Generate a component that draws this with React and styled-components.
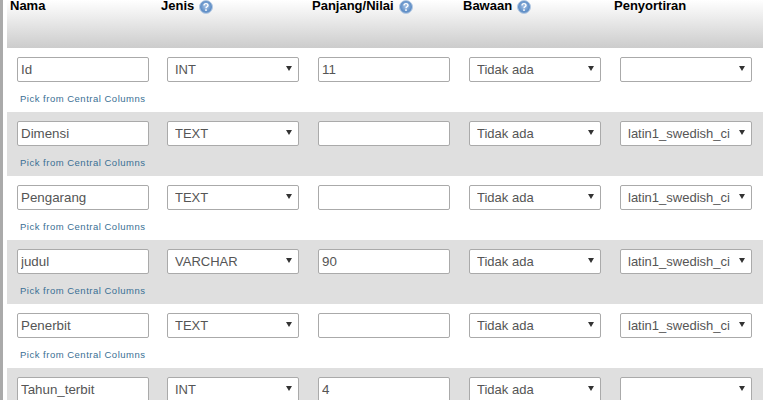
import React from "react";
import styled, { createGlobalStyle } from "styled-components";

const GlobalStyle = createGlobalStyle`
  html, body {
    margin: 0;
    height: 400px;
    overflow: hidden;
    background: #fff;
    font-family: "Liberation Sans", Arial, sans-serif;
  }
`;

const Page = styled.div`
  height: 400px;
  overflow: hidden;
  box-sizing: border-box;
  padding-left: 4px;
  border-left: 3px solid #aaa;
`;

const COLUMNS = "150px 151px 151px 151px 151px";

const HeaderRow = styled.div`
  display: grid;
  grid-template-columns: 151px 151px 151px 151px 151px;
  height: 48px;
  padding-left: 3px;
  background: linear-gradient(#fff, #ccc);
`;

const HeaderCell = styled.div`
  display: flex;
  align-items: flex-start;
  gap: 5px;
  font-size: 13px;
  font-weight: bold;
  line-height: 12px;
  color: #000;
`;

const Row = styled.div`
  display: grid;
  grid-template-columns: ${COLUMNS};
  height: 64px;
  box-sizing: border-box;
  padding: 9px 0 0 10px;
  background: ${(p) => (p.$shaded ? "#dfdfdf" : "#fff")};
`;

const Field = styled.div`
  position: relative;
  width: 132px;
  height: 25px;
`;

const TextInput = styled.input`
  display: block;
  width: 100%;
  height: 100%;
  box-sizing: border-box;
  padding: 0 3px;
  border: 1px solid #aaa;
  border-radius: 2px;
  background: #fff;
  color: #555;
  font: 13.33px "Liberation Sans", Arial, sans-serif;
  outline: none;
`;

const Select = styled.select`
  display: block;
  width: 100%;
  height: 100%;
  box-sizing: border-box;
  padding: 0 14px 0 7px;
  border: 1px solid #aaa;
  border-radius: 2px;
  background: #fff;
  color: #555;
  font: 13px "Liberation Sans", Arial, sans-serif;
  appearance: none;
  outline: none;
`;

const Arrow = styled.span`
  position: absolute;
  top: 9px;
  right: 7px;
  width: 0;
  height: 0;
  border-left: 3.5px solid transparent;
  border-right: 3.5px solid transparent;
  border-top: 5px solid #333;
  pointer-events: none;
`;

const PickLink = styled.a`
  display: block;
  margin: 11px 0 0 3px;
  font-size: 9.5px;
  line-height: 11px;
  letter-spacing: 0.5px;
  color: #3a6f94;
  text-decoration: none;
  white-space: nowrap;
`;

const NameCell = styled.div`
  display: flex;
  flex-direction: column;
`;

function HelpIcon() {
  return (
    <svg width="14" height="14" viewBox="0 0 14 14" style={{ flex: "none" }}>
      <defs>
        <radialGradient id="help" cx="50%" cy="45%" r="60%">
          <stop offset="0%" stopColor="#a9c4e6" />
          <stop offset="70%" stopColor="#5f8ec6" />
          <stop offset="100%" stopColor="#8fb0d8" />
        </radialGradient>
      </defs>
      <circle cx="7" cy="7" r="6.5" fill="url(#help)" stroke="#b4c9e2" strokeWidth="1" />
      <path d="M5 5.4c0-2.4 4-2.4 4 0 0 1.4-2 1.3-2 2.8" fill="none" stroke="#fff" strokeWidth="1.4" />
      <rect x="6.2" y="9.3" width="1.6" height="1.6" fill="#fff" />
    </svg>
  );
}

function SelectField({ value }) {
  return (
    <Field>
      <Select defaultValue={value}>
        <option value={value}>{value}</option>
      </Select>
      <Arrow />
    </Field>
  );
}

const HEADERS = [
  ["Nama", false],
  ["Jenis", true],
  ["Panjang/Nilai", true],
  ["Bawaan", true],
  ["Penyortiran", false],
];

const COLLATION = "latin1_swedish_ci";

const ROWS = [
  { name: "Id", type: "INT", length: "11", collation: "" },
  { name: "Dimensi", type: "TEXT", length: "", collation: COLLATION },
  { name: "Pengarang", type: "TEXT", length: "", collation: COLLATION },
  { name: "judul", type: "VARCHAR", length: "90", collation: COLLATION },
  { name: "Penerbit", type: "TEXT", length: "", collation: COLLATION },
  { name: "Tahun_terbit", type: "INT", length: "4", collation: "" },
];

export default function App() {
  return (
    <Page>
      <GlobalStyle />
      <HeaderRow>
        {HEADERS.map(([label, help]) => (
          <HeaderCell key={label}>
            {label}
            {help && <HelpIcon />}
          </HeaderCell>
        ))}
      </HeaderRow>
      {ROWS.map((row, i) => (
        <Row key={row.name} $shaded={i % 2 === 1}>
          <NameCell>
            <Field>
              <TextInput defaultValue={row.name} />
            </Field>
            <PickLink href="#">Pick from Central Columns</PickLink>
          </NameCell>
          <SelectField value={row.type} />
          <Field>
            <TextInput defaultValue={row.length} />
          </Field>
          <SelectField value="Tidak ada" />
          <SelectField value={row.collation} />
        </Row>
      ))}
    </Page>
  );
}
